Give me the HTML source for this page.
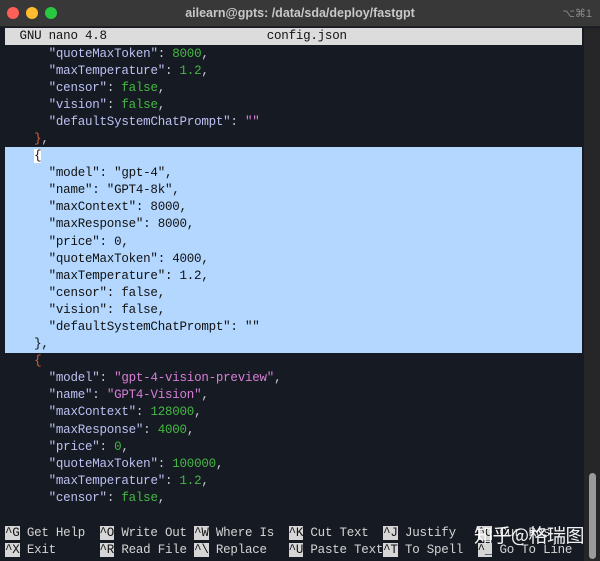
<!DOCTYPE html>
<html><head><meta charset="utf-8"><style>
*{margin:0;padding:0;box-sizing:border-box}
body{width:600px;height:561px;overflow:hidden;background:#161a22;position:relative;font-family:"Liberation Mono",monospace}
#tb{position:absolute;left:0;top:0;width:600px;height:27px;background:#383838;border-bottom:1px solid #222}
.dot{position:absolute;top:7px;width:12px;height:12px;border-radius:50%}
#tt{position:absolute;left:0;width:600px;top:6px;text-align:center;color:#c8c8c8;font:bold 12.5px "Liberation Sans",sans-serif}
#kb{position:absolute;right:8px;top:7px;color:#8a8a8a;font:11px "Liberation Sans","DejaVu Sans",sans-serif}
.m{font-size:12.5px;letter-spacing:-0.23px;white-space:pre}
#hd{position:absolute;left:5px;top:28px;width:577px;height:17px;background:#dcdcdc;color:#111;line-height:17px}
#rs{position:absolute;left:584px;top:28px;width:16px;height:533px;background:#262628}
#th{position:absolute;left:589px;top:473px;width:7px;height:86px;border-radius:4px;background:#9a9a9a}
#hl{position:absolute;left:5px;top:147px;width:577px;height:206px;background:#b3d7ff}
pre{position:absolute;left:5px;top:45.5px;line-height:17.1px;color:#c9c9d6;font-family:"Liberation Mono",monospace}
.k{color:#bcc0f2}.n{color:#44b844}.s{color:#d77ed7}.b{color:#d8603c}.h{color:#111}
.cur{background:#fff}
#sc{position:absolute;left:5px;top:524.5px;line-height:17.1px;color:#d4d4d4}
.r{background:#d6d6d6;color:#111}
#wm{position:absolute;left:474px;top:521px;color:#fff;font:19px "Noto Sans CJK SC",sans-serif;letter-spacing:-0.5px;opacity:.95}
</style></head><body>
<div id="tb"><div class="dot" style="left:7px;background:#fe5f57"></div><div class="dot" style="left:26px;background:#febc2e"></div><div class="dot" style="left:45px;background:#28c840"></div>
<div id="tt">ailearn@gpts: /data/sda/deploy/fastgpt</div><div id="kb">⌥⌘1</div></div>
<div id="hd" class="m">  GNU nano 4.8                      config.json</div>
<div id="hl"></div>
<pre class="m">      <span class="k">"quoteMaxToken"</span>: <span class="n">8000</span>,
      <span class="k">"maxTemperature"</span>: <span class="n">1.2</span>,
      <span class="k">"censor"</span>: <span class="n">false</span>,
      <span class="k">"vision"</span>: <span class="n">false</span>,
      <span class="k">"defaultSystemChatPrompt"</span>: <span class="s">""</span>
    <span class="b">}</span>,
<span class="h">    <span class="cur">{</span>
      "model": "gpt-4",
      "name": "GPT4-8k",
      "maxContext": 8000,
      "maxResponse": 8000,
      "price": 0,
      "quoteMaxToken": 4000,
      "maxTemperature": 1.2,
      "censor": false,
      "vision": false,
      "defaultSystemChatPrompt": ""
    },</span>
    <span class="b">{</span>
      <span class="k">"model"</span>: <span class="s">"gpt-4-vision-preview"</span>,
      <span class="k">"name"</span>: <span class="s">"GPT4-Vision"</span>,
      <span class="k">"maxContext"</span>: <span class="n">128000</span>,
      <span class="k">"maxResponse"</span>: <span class="n">4000</span>,
      <span class="k">"price"</span>: <span class="n">0</span>,
      <span class="k">"quoteMaxToken"</span>: <span class="n">100000</span>,
      <span class="k">"maxTemperature"</span>: <span class="n">1.2</span>,
      <span class="k">"censor"</span>: <span class="n">false</span>,</pre>
<div id="sc" class="m"><span class="r">^G</span> Get Help  <span class="r">^O</span> Write Out <span class="r">^W</span> Where Is  <span class="r">^K</span> Cut Text  <span class="r">^J</span> Justify   <span class="r">^C</span> Cur Pos
<span class="r">^X</span> Exit      <span class="r">^R</span> Read File <span class="r">^\</span> Replace   <span class="r">^U</span> Paste Text<span class="r">^T</span> To Spell  <span class="r">^_</span> Go To Line</div>
<div id="wm">知乎@格瑞图</div>
<div id="rs"></div><div id="th"></div>
</body></html>
